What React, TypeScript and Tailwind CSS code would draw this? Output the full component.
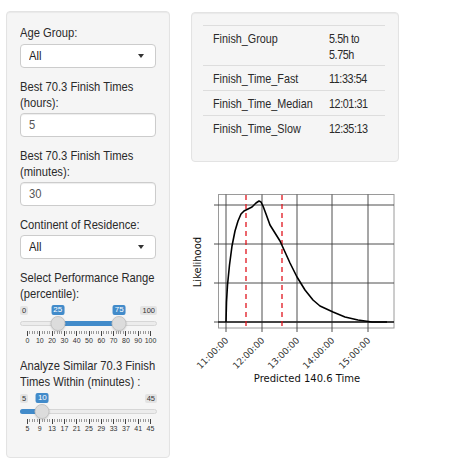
import React from 'react';

// the original uses a narrow face; squeeze Liberation Sans to get the same widths
function Line({ children, className = '' }: { children: React.ReactNode; className?: string }) {
  return <span className={`block origin-left scale-x-[0.83] whitespace-nowrap ${className}`}>{children}</span>;
}

type SliderProps = {
  min: number;
  max: number;
  from: number;
  to?: number;
  labels: number[];
};

function RangeSlider({ min, max, from, to, labels }: SliderProps) {
  const pos = (v: number) => 7 + (123 * (v - min)) / (max - min);
  const barLeft = to === undefined ? 0 : pos(from);
  const barRight = to === undefined ? pos(from) : pos(to);
  const steps = (labels.length - 1) * 5;
  const ticks = Array.from({ length: steps + 1 }, (_, i) => ({
    x: 7 + (123 * i) / steps,
    major: i % 5 === 0,
  }));
  const handles = to === undefined ? [from] : [from, to];

  return (
    <div className="relative h-[56px] w-[137px] font-['Liberation_Sans',sans-serif]">
      <span className="absolute left-0 top-[4px] h-[9px] rounded-[2px] bg-[#e3e3e3] px-[2px] text-[7.5px] leading-[9px] text-[#333]">
        {min}
      </span>
      <span className="absolute right-0 top-[4px] h-[9px] rounded-[2px] bg-[#e3e3e3] px-[2px] text-[7.5px] leading-[9px] text-[#333]">
        {max}
      </span>
      {handles.map((v) => (
        <span
          key={'b' + v}
          className="absolute top-[3px] h-[10px] -translate-x-1/2 rounded-[2px] bg-[#428bca] px-[2px] text-[8px] leading-[10px] text-white"
          style={{ left: pos(v) }}
        >
          {v}
        </span>
      ))}
      <div className="absolute left-0 right-0 top-[19px] h-[5px] rounded-full border border-[#d6d6d6] bg-[#ececec]" />
      <div
        className="absolute top-[19px] h-[5px] rounded-l-full bg-[#428bca]"
        style={{ left: barLeft, width: barRight - barLeft }}
      />
      {handles.map((v) => (
        <div
          key={'h' + v}
          className="absolute top-[14px] h-[15px] w-[15px] -translate-x-1/2 rounded-full border border-[#c4c4c4] bg-[#dcdcdc] shadow-[0_1px_2px_rgba(0,0,0,0.15)]"
          style={{ left: pos(v) }}
        />
      ))}
      {ticks.map((t, i) => (
        <div
          key={'t' + i}
          className={t.major ? 'absolute top-[29px] h-[5px] w-px bg-[#444]' : 'absolute top-[29px] h-[2.5px] w-px bg-[#999]'}
          style={{ left: t.x }}
        />
      ))}
      {labels.map((l, i) => (
        <span
          key={'l' + l}
          className="absolute top-[34px] -translate-x-1/2 text-[7px] leading-[9px] text-[#333]"
          style={{ left: 7.5 + (123 * i) / (labels.length - 1) }}
        >
          {l}
        </span>
      ))}
    </div>
  );
}

function SelectBox({ value }: { value: string }) {
  return (
    <div className="flex h-[24px] w-[136px] items-center justify-between rounded-[4px] border border-[#ccc] bg-white pl-[8px] pr-[11px] text-[#222]">
      <Line>{value}</Line>
      <span className="h-0 w-0 border-l-[3.5px] border-r-[3.5px] border-t-[4px] border-l-transparent border-r-transparent border-t-[#333]" />
    </div>
  );
}

function TextBox({ value }: { value: string }) {
  return (
    <div className="flex h-[24px] w-[136px] items-center rounded-[4px] border border-[#ccc] bg-white pl-[8px] text-[#555] shadow-[inset_0_1px_1px_rgba(0,0,0,0.075)]">
      <Line>{value}</Line>
    </div>
  );
}

const rows: [string, string[]][] = [
  ['Finish_Group', ['5.5h to', '5.75h']],
  ['Finish_Time_Fast', ['11:33:54']],
  ['Finish_Time_Median', ['12:01:31']],
  ['Finish_Time_Slow', ['12:35:13']],
];

const curve = [
  [226, 322], [226.5, 302], [227.5, 285], [229.5, 265], [232, 246], [235, 231],
  [238, 221], [241, 214], [244, 211], [248, 209], [252, 207], [256, 203],
  [259, 201], [261, 202], [263, 206], [266, 214], [270, 225], [275, 233],
  [280, 241], [285, 252], [290, 263], [297, 277], [305, 290], [313, 300],
  [320, 306], [333, 312], [345, 317], [358, 320], [372, 322], [387, 322],
];

function DensityPlot() {
  const xs = [226, 262, 297, 332, 368];
  const ys = [205, 244, 283, 322];
  const xl = ['11:00:00', '12:00:00', '13:00:00', '14:00:00', '15:00:00'];
  return (
    <svg width="208" height="225" viewBox="191 170 208 225" className="mt-[8px] block">
      <rect x="218.5" y="194.5" width="175.5" height="133.5" fill="white" stroke="#9a9a9a" strokeWidth="1" />
      {xs.map((x) => (
        <line key={'v' + x} x1={x} y1={194.5} x2={x} y2={332} stroke="#3a3a3a" strokeWidth="0.9" />
      ))}
      {ys.map((y) => (
        <line key={'h' + y} x1={214} y1={y} x2={394} y2={y} stroke="#3a3a3a" strokeWidth="0.9" />
      ))}
      <line x1={218} y1={322} x2={394} y2={322} stroke="#222" strokeWidth="1.6" />
      {[246, 282].map((x) => (
        <line key={'r' + x} x1={x} y1={195} x2={x} y2={328} stroke="#e0141e" strokeWidth="1.3" strokeDasharray="5 4" />
      ))}
      <polyline
        points={curve.map((p) => p.join(',')).join(' ')}
        fill="none"
        stroke="#000"
        strokeWidth="1.6"
        strokeLinejoin="round"
      />
      {xs.map((x, i) => (
        <text
          key={'xl' + x}
          x={x + 3}
          y={341}
          fontSize="9"
          fontFamily="DejaVu Sans, sans-serif"
          fill="#333"
          textAnchor="end"
          transform={`rotate(-45 ${x + 3} 341)`}
        >
          {xl[i]}
        </text>
      ))}
      <text x={307} y={382} fontSize="10" fontFamily="DejaVu Sans, sans-serif" fill="#111" textAnchor="middle">
        Predicted 140.6 Time
      </text>
      <text
        x={201}
        y={262}
        fontSize="10"
        fontFamily="DejaVu Sans, sans-serif"
        fill="#111"
        textAnchor="middle"
        transform="rotate(-90 201 262)"
      >
        Likelihood
      </text>
    </svg>
  );
}

export default function App() {
  return (
    <div className="flex h-[474px] w-[474px] items-start bg-white font-['Liberation_Sans',sans-serif] text-[13.5px] leading-[16px] text-[#2a2a2a]">
      <div className="ml-[6px] mt-[11px] flex h-[447px] w-[164px] flex-col rounded-[4px] border border-[#e3e3e3] bg-[#f5f5f5] pl-[13px] pr-[12px] pt-[13px] shadow-[inset_0_1px_1px_rgba(0,0,0,0.05)]">
        <label>
          <Line>Age Group:</Line>
        </label>
        <div className="mt-[3px]">
          <SelectBox value="All" />
        </div>

        <label className="mt-[11px]">
          <Line>Best 70.3 Finish Times</Line>
          <Line>(hours):</Line>
        </label>
        <div className="mt-[2px]">
          <TextBox value="5" />
        </div>

        <label className="mt-[11px]">
          <Line>Best 70.3 Finish Times</Line>
          <Line>(minutes):</Line>
        </label>
        <div className="mt-[2px]">
          <TextBox value="30" />
        </div>

        <label className="mt-[11px]">
          <Line>Continent of Residence:</Line>
        </label>
        <div className="mt-[2px]">
          <SelectBox value="All" />
        </div>

        <label className="mt-[11px]">
          <Line>Select Performance Range</Line>
          <Line>(percentile):</Line>
        </label>
        <RangeSlider min={0} max={100} from={25} to={75} labels={[0, 10, 20, 30, 40, 50, 60, 70, 80, 90, 100]} />

        <label>
          <Line>Analyze Similar 70.3 Finish</Line>
          <Line>Times Within (minutes) :</Line>
        </label>
        <RangeSlider min={5} max={45} from={10} labels={[5, 9, 13, 17, 21, 25, 29, 33, 37, 41, 45]} />
      </div>

      <div className="ml-[21px] flex w-[208px] flex-col">
        <div className="mt-[12px] h-[150px] rounded-[4px] border border-[#e3e3e3] bg-[#f5f5f5] pl-[11px] pr-[13px] pt-[12px] shadow-[inset_0_1px_1px_rgba(0,0,0,0.05)]">
          <table className="w-[182px] table-fixed border-collapse text-[13px] leading-[16px]">
            <colgroup>
              <col className="w-[116px]" />
              <col className="w-[66px]" />
            </colgroup>
            <tbody>
              {rows.map(([k, v], i) => (
                <tr key={k} className="border-t border-[#dddddd] align-top">
                  <td className={`pl-[10px] pt-[5px] ${i === 0 ? 'pb-[2px]' : 'pb-[3px]'}`}>
                    <Line>{k}</Line>
                  </td>
                  <td className={`pl-[10px] pt-[5px] ${i === 0 ? 'pb-[2px]' : 'pb-[3px]'}`}>
                    {v.map((s) => (
                      <Line key={s} className="tracking-[-0.5px]">
                        {s}
                      </Line>
                    ))}
                  </td>
                </tr>
              ))}
            </tbody>
          </table>
        </div>
        <DensityPlot />
      </div>
    </div>
  );
}
